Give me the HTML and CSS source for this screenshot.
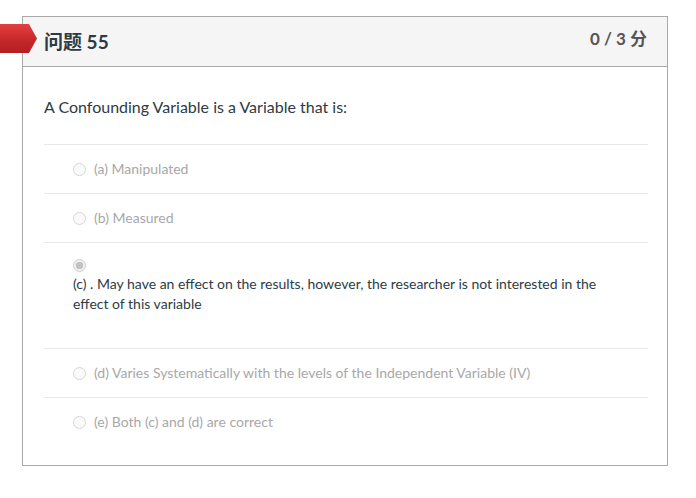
FILE: index.html
```html
<!DOCTYPE html>
<html lang="zh">
<head>
<meta charset="utf-8">
<title>问题 55</title>
<link rel="stylesheet" href="styles.css">
</head>
<body>
<div class="quiz">
  <div class="flag"></div>
  <div class="card">
    <div class="card-header">
      <h2 class="title">问题 55</h2>
      <div class="score">0 / 3 分</div>
    </div>
    <div class="card-body">
      <div class="question">A Confounding Variable is a Variable that is:</div>
      <div class="answers">
        <div class="answer disabled">
          <span class="radio"></span>
          <span class="label">(a) Manipulated</span>
        </div>
        <div class="answer disabled">
          <span class="radio"></span>
          <span class="label">(b) Measured</span>
        </div>
        <div class="answer selected">
          <div class="radio-row"><span class="radio checked"></span></div>
          <div class="label">(c) . May have an effect on the results, however, the researcher is not interested in the effect of this variable</div>
        </div>
        <div class="answer disabled">
          <span class="radio"></span>
          <span class="label">(d) Varies Systematically with the levels of the Independent Variable (IV)</span>
        </div>
        <div class="answer disabled">
          <span class="radio"></span>
          <span class="label">(e) Both (c) and (d) are correct</span>
        </div>
      </div>
    </div>
  </div>
</div>
</body>
</html>
```

FILE: styles.css
```css
html, body {
  margin: 0;
  padding: 0;
  background: #ffffff;
}
body {
  font-family: Lato, "Noto Sans CJK SC", sans-serif;
  color: #2d3b45;
}
.quiz {
  position: relative;
  padding: 16px 0 0 22px;
  width: 646px;
}
.flag {
  position: absolute;
  left: 0;
  top: 24px;
  width: 37px;
  height: 29px;
  background: linear-gradient(#e2403f, #c4262a 60%, #b31f23);
  clip-path: polygon(0 0, 29px 0, 37px 50%, 29px 100%, 0 100%);
}
.card {
  border: 1px solid #a9a9a9;
}
.card-header {
  height: 49px;
  background: #f5f5f5;
  border-bottom: 1px solid #a9a9a9;
  display: flex;
  justify-content: space-between;
  align-items: flex-start;
  padding: 0 20px 0 21px;
}
.title {
  margin: 13px 0 0 0;
  font-size: 19px;
  line-height: 24px;
  font-weight: 700;
  color: #2d3b45;
  font-family: Lato, "Noto Sans CJK SC", sans-serif;
}
.score {
  margin-top: 11px;
  font-size: 17px;
  line-height: 22px;
  font-weight: 700;
  color: #555555;
}
.card-body {
  padding: 30px 19px 19px 21px;
}
.question {
  font-size: 16px;
  line-height: 20px;
  margin-bottom: 27px;
}
.answer {
  border-top: 1px solid #e8e8e8;
  padding: 14px 0 14px 29px;
  font-size: 14px;
  line-height: 20px;
  display: flex;
  align-items: center;
}
.answer.disabled {
  color: #a8a8a8;
}
.radio {
  box-sizing: border-box;
  width: 13px;
  height: 13px;
  border-radius: 50%;
  border: 1px solid #d6d6d6;
  background: #fafafa;
  flex: none;
  margin-right: 8px;
}
.answer.selected {
  display: block;
  padding-top: 13px;
  padding-bottom: 34px;
  color: #2d3b45;
}
.radio-row {
  height: 18px;
  display: flex;
  align-items: center;
}
.radio.checked {
  border: 1px solid #cfcfcf;
  background: radial-gradient(circle, #c2c2c2 0 3.5px, #f0f0f0 4px);
}
.answer.selected .label {
  padding-right: 40px;
}
```
